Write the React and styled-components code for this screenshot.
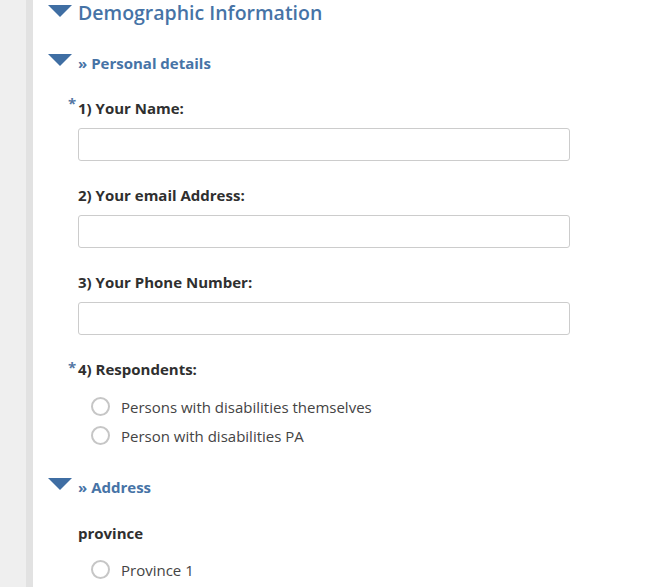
import React from "react";
import styled, { createGlobalStyle } from "styled-components";

const GlobalStyle = createGlobalStyle`
  html, body {
    margin: 0;
    padding: 0;
    background: #fff;
    font-family: "Open Sans", "Liberation Sans", sans-serif;
  }
`;

const Page = styled.div`
  display: flex;
  min-height: 587px;
  overflow: hidden;
`;

const Rail = styled.div`
  width: 26px;
  flex-shrink: 0;
  background: #efefef;
`;

const RailEdge = styled.div`
  width: 7px;
  flex-shrink: 0;
  background: #e2e2e2;
`;

const Content = styled.div`
  flex: 1;
  padding-left: 15px;
`;

const SectionHead = styled.div`
  display: flex;
  align-items: flex-start;
  gap: 6px;
  margin-top: ${(p) => p.$top || 0}px;
`;

const Caret = styled.span`
  display: block;
  flex-shrink: 0;
  width: 0;
  height: 0;
  margin-top: ${(p) => p.$offset || 0}px;
  border-left: 12px solid transparent;
  border-right: 12px solid transparent;
  border-top: 12px solid #3f6ea3;
`;

const Title = styled.h1`
  margin: 0;
  padding-top: 1px;
  font-size: 19.5px;
  line-height: 24px;
  font-weight: 600;
  color: #4673a6;
`;

const SubTitle = styled.h2`
  margin: 0;
  font-size: 15px;
  line-height: 20px;
  font-weight: 700;
  color: #4673a6;
`;

const Question = styled.div`
  padding-left: 30px;
  margin-top: ${(p) => p.$top || 0}px;
`;

const Label = styled.div`
  font-size: 15px;
  line-height: 20px;
  font-weight: 700;
  color: #2f2f2f;
`;

const Star = styled.span`
  display: inline-block;
  width: 10px;
  margin-left: -10px;
  font-size: 15px;
  font-weight: 700;
  color: #5577a3;
  vertical-align: ${(p) => (p.$low ? 2 : 5)}px;
  line-height: 0;
`;

const TextInput = styled.input`
  display: block;
  box-sizing: border-box;
  width: 492px;
  height: 33px;
  margin-top: 10px;
  border: 1px solid #cccccc;
  border-radius: 3px;
  background: #fff;
  font: inherit;
  font-size: 14px;
  padding: 0 10px;
  outline: none;
`;

const Options = styled.div`
  display: flex;
  flex-direction: column;
  margin-top: ${(p) => p.$top || 13}px;
  padding-left: 13px;
`;

const Option = styled.label`
  display: flex;
  align-items: center;
  gap: 11px;
  height: 29px;
  font-size: 15px;
  color: #444;
  cursor: pointer;
`;

const Radio = styled.span`
  box-sizing: border-box;
  flex-shrink: 0;
  width: 19px;
  height: 19px;
  border-radius: 50%;
  border: 2px solid #c6c6c6;
  background: #fff;
`;

const questions = [
  { n: 1, text: "Your Name:", required: true },
  { n: 2, text: "Your email Address:" },
  { n: 3, text: "Your Phone Number:" },
];

export default function App() {
  return (
    <>
      <GlobalStyle />
      <Page>
        <Rail />
        <RailEdge />
        <Content>
          <SectionHead>
            <Caret $offset={5} />
            <Title>Demographic Information</Title>
          </SectionHead>

          <SectionHead $top={28}>
            <Caret $offset={1} />
            <SubTitle>» Personal details</SubTitle>
          </SectionHead>

          {questions.map((q, i) => (
            <Question key={q.n} $top={i === 0 ? 25 : 24}>
              <Label>
                {q.required && <Star>*</Star>}
                {q.n}) {q.text}
              </Label>
              <TextInput type="text" />
            </Question>
          ))}

          <Question $top={24}>
            <Label>
              <Star $low>*</Star>4) Respondents:
            </Label>
            <Options>
              <Option>
                <Radio />
                Persons with disabilities themselves
              </Option>
              <Option>
                <Radio />
                Person with disabilities PA
              </Option>
            </Options>
          </Question>

          <SectionHead $top={27}>
            <Caret $offset={1} />
            <SubTitle>» Address</SubTitle>
          </SectionHead>

          <Question $top={26}>
            <Label>province</Label>
            <Options $top={12}>
              <Option>
                <Radio />
                Province 1
              </Option>
            </Options>
          </Question>
        </Content>
      </Page>
    </>
  );
}
